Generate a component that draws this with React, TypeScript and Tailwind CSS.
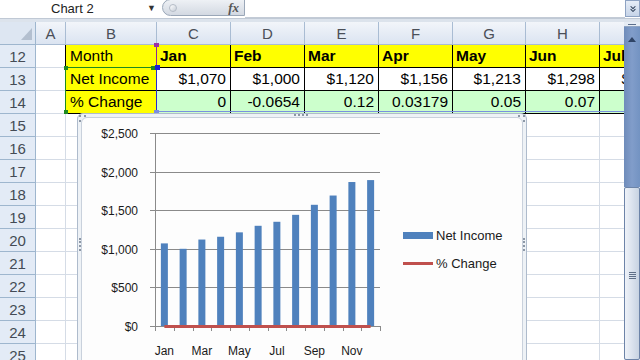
import React from "react";
import { ChevronsDown } from "lucide-react";

const cols = [
  { key: "A", w: "w-[30px]" },
  { key: "B", w: "w-[91px]" },
  { key: "C", w: "w-[74px]" },
  { key: "D", w: "w-[74px]" },
  { key: "E", w: "w-[74px]" },
  { key: "F", w: "w-[74px]" },
  { key: "G", w: "w-[73px]" },
  { key: "H", w: "w-[74px]" },
  { key: "I", w: "w-[74px]" },
];

const months = ["Jan", "Feb", "Mar", "Apr", "May", "Jun", "Jul"];
const income = ["$1,070", "$1,000", "$1,120", "$1,156", "$1,213", "$1,298", "$1,350"];
const change = ["0", "-0.0654", "0.12", "0.03179", "0.05", "0.07", "0.04"];

const chartValues = [1070, 1000, 1120, 1156, 1213, 1298, 1350, 1440, 1570, 1690, 1865, 1890];
const chartMonths = ["Jan", "Feb", "Mar", "Apr", "May", "Jun", "Jul", "Aug", "Sep", "Oct", "Nov", "Dec"];

const Y0 = 326;
const SCALE = 193 / 2500;
const X0 = 155;
const STEP = 18.75;

const Cell = ({ className, children }: { className: string; children?: React.ReactNode }) => (
  <div className={`shrink-0 h-full flex items-center border-r border-b ${className}`}>{children}</div>
);

const dataCell = (row: number, i: number) => {
  // i: index in C..I
  if (row === 12)
    return (
      <Cell key={i} className={`${cols[i + 2].w} bg-[#ffff00] border-black font-bold pl-[3px]`}>
        {months[i]}
      </Cell>
    );
  if (row === 13)
    return (
      <Cell key={i} className={`${cols[i + 2].w} bg-white border-black justify-end pr-[4px]`}>
        {income[i]}
      </Cell>
    );
  return (
    <Cell key={i} className={`${cols[i + 2].w} bg-[#ccffcc] border-black justify-end pr-[4px]`}>
      {change[i]}
    </Cell>
  );
};

const Chart = () => {
  const grid = [0, 500, 1000, 1500, 2000, 2500];
  const labels = ["$0", "$500", "$1,000", "$1,500", "$2,000", "$2,500"];
  return (
    <svg width="440" height="260" viewBox="82 118 440 260" className="block" fontFamily="'Liberation Sans', Arial, sans-serif">
      {grid.map((g, i) => {
        const y = Math.round(Y0 - g * SCALE) + 0.5;
        return (
          <g key={g}>
            <line x1={150} x2={380} y1={y} y2={y} stroke="#8a8a8a" strokeWidth={1} />
            <text x={138} y={y + 4.5} fontSize="12" textAnchor="end" fill="#1a1a1a">
              {labels[i]}
            </text>
          </g>
        );
      })}
      <line x1={155.5} x2={155.5} y1={133} y2={330} stroke="#8a8a8a" strokeWidth={1} />
      {Array.from({ length: 13 }).map((_, k) => {
        const x = Math.round(X0 + STEP * k) + 0.5;
        return <line key={k} x1={x} x2={x} y1={326} y2={331} stroke="#8a8a8a" strokeWidth={1} />;
      })}
      {chartValues.map((v, i) => {
        const cx = X0 + STEP * (i + 0.5);
        const h = v * SCALE;
        return <rect key={i} x={cx - 3.5} y={Y0 - h} width={7} height={h} fill="#4f81bd" />;
      })}
      <line x1={X0 + STEP * 0.5} x2={X0 + STEP * 11.5} y1={326.5} y2={326.5} stroke="#c0504d" strokeWidth={3} />
      {chartMonths.map((m, i) =>
        i % 2 === 0 ? (
          <text key={m} x={X0 + STEP * (i + 0.5)} y={355} fontSize="12" textAnchor="middle" fill="#1a1a1a">
            {m}
          </text>
        ) : null
      )}
      <rect x={403} y={232} width={30} height={7} fill="#4f81bd" />
      <text x={436} y={240} fontSize="13" fill="#1a1a1a">
        Net Income
      </text>
      <line x1={403} x2={433} y1={263.5} y2={263.5} stroke="#c0504d" strokeWidth={3} />
      <text x={436} y={268} fontSize="13" fill="#1a1a1a">
        % Change
      </text>
    </svg>
  );
};

const App = () => {
  const rows = [12, 13, 14, 15, 16, 17, 18, 19, 20, 21, 22, 23, 24, 25];

  return (
    <div className="w-[640px] h-[360px] overflow-hidden bg-white flex flex-col font-['Liberation_Sans',Arial,sans-serif] text-black">
      {/* formula bar */}
      <div className="h-[18px] flex shrink-0 bg-white">
        <div className="w-[162px] flex items-center pl-[51px] pr-[6px] text-[13px] text-[#222]">
          <span className="flex-1">Chart 2</span>
          <span className="text-[9px] text-[#333]">▼</span>
        </div>
        <div className="w-[83px] h-[17px] -mt-[1px] rounded-bl-[10px] rounded-tl-[10px] border border-[#9aa7b8] bg-gradient-to-b from-[#eef1f5] to-[#d3d9e2] flex items-center pl-[6px] pr-[5px]">
          <div className="w-[8px] h-[8px] rounded-full bg-gradient-to-br from-white to-[#c7ced8] border border-[#b4bcc7]" />
          <span className="ml-auto font-['Liberation_Serif',serif] italic font-bold text-[13px] text-[#555] leading-none">
            fx
          </span>
        </div>
        <div className="flex-1 border-b border-[#c3cbd6] bg-white" />
        <div className="w-[15px] h-[17px] bg-gradient-to-b from-[#e6edf7] to-[#c6d4e8] border border-[#8ea3c3] flex items-center justify-center">
          <ChevronsDown size={10} strokeWidth={2.5} color="#2d3e57" />
        </div>
      </div>
      <div className="h-[4px] shrink-0 bg-[#dce3ec] border-t border-[#c0c9d5]" />

      {/* sheet */}
      <div className="flex flex-1 min-h-0">
        <div className="w-[624px] overflow-hidden relative text-[15.5px] leading-none">
          {/* column header */}
          <div className="flex h-[23px]">
            <div className="w-[36px] shrink-0 h-full bg-[#dde6f2] border-r border-b border-[#9eb6ce] flex items-end justify-end pr-[3px] pb-[4px]">
              <svg width="11" height="12" viewBox="0 0 11 12">
                <polygon points="11,0 11,12 0,12" fill="#b3bfcf" />
              </svg>
            </div>
            {cols.map((c) => (
              <div
                key={c.key}
                className={`${c.w} shrink-0 h-full flex items-center justify-center text-[15px] text-[#4a4f58] bg-gradient-to-b from-[#f2f5fa] to-[#dbe4f1] border-r border-b border-[#a9bcd3]`}
              >
                {c.key}
              </div>
            ))}
          </div>

          {rows.map((r) => (
            <div key={r} className="flex h-[23px]">
              <div className="w-[36px] shrink-0 h-full flex items-center justify-center text-[15px] text-[#444b55] bg-[#e3ebf6] border-r border-b border-[#9eb6ce]">
                {r}
              </div>
              {r <= 14 ? (
                <>
                  <Cell className="w-[30px] bg-white border-r-black border-b-[#d5dce6]" />
                  <Cell className="w-[91px] bg-[#ffff00] border-black pl-[4px]">
                    {r === 12 ? "Month" : r === 13 ? "Net Income" : "% Change"}
                  </Cell>
                  {months.map((_, i) => dataCell(r, i))}
                </>
              ) : (
                cols.map((c) => <Cell key={c.key} className={`${c.w} bg-white border-[#d5dce6]`} />)
              )}
            </div>
          ))}

          {/* chart data range markers */}
          <div className="absolute left-[66px] top-[45px] w-[91px] h-[1px] bg-[#1f8a1f]" />
          <div className="absolute left-[65px] top-[45px] w-[1px] h-[46px] bg-[#1f8a1f]" />
          <div className="absolute left-[156px] top-[23px] w-[1px] h-[22px] bg-[#8a2a9a]" />
          <div className="absolute left-[156px] top-[46px] w-[1px] h-[45px] bg-[#2a2ad0]" />
          <div className="absolute left-[157px] top-[89px] w-[467px] h-[1px] bg-[#7b8ee0]" />
          <div className="absolute left-[154px] top-[21px] w-[5px] h-[4px] bg-[#9b2fa8]" />
          <div className="absolute left-[151px] top-[44px] w-[4px] h-[4px] bg-[#1f8a1f]" />
          <div className="absolute left-[155px] top-[43px] w-[5px] h-[5px] bg-[#1c1cd8]" />
          <div className="absolute left-[64px] top-[44px] w-[4px] h-[4px] bg-[#1f8a1f]" />
          <div className="absolute left-[64px] top-[88px] w-[4px] h-[4px] bg-[#1f8a1f]" />
          <div className="absolute left-[154px] top-[88px] w-[5px] h-[4px] bg-[#7b8ee0]" />

          {/* floating chart */}
          <div className="absolute left-[77px] top-[91px] w-[450px] h-[280px] rounded-[6px] border border-[#aebbcc] bg-[#eef2f6] p-[3px]">
            <div className="w-full h-full rounded-[6px] border border-[#c9d1dc] bg-[#fdfdfd] overflow-hidden">
              <Chart />
            </div>
            <div className="absolute left-[1px] top-[124px] w-[2px] h-[13px] border-l-2 border-dotted border-[#8c97a6]" />
            <div className="absolute right-[1px] top-[124px] w-[2px] h-[13px] border-l-2 border-dotted border-[#8c97a6]" />
            <div className="absolute left-[216px] top-[0px] w-[14px] h-[2px] border-t-2 border-dotted border-[#8c97a6]" />
            <div className="absolute left-[1px] top-[1px] w-[7px] h-[7px] border-l-2 border-t-2 border-dotted border-[#8c97a6]" />
            <div className="absolute right-[1px] top-[1px] w-[7px] h-[7px] border-r-2 border-t-2 border-dotted border-[#8c97a6]" />
          </div>
        </div>

        {/* vertical scrollbar */}
        <div className="w-[16px] flex flex-col bg-[#dfe6ef]">
          <div className="h-[5px] shrink-0 bg-[#e6ecf4] border-b border-[#8fa5c4] flex items-center justify-center">
            <div className="w-[8px] h-[1px] bg-[#5c6f8c]" />
          </div>
          <div className="h-[160px] shrink-0 bg-gradient-to-r from-[#6f8cba] via-[#819dca] to-[#7393c2] flex justify-center pt-[10px]">
            <svg width="8" height="5" viewBox="0 0 8 5">
              <polygon points="4,0 8,5 0,5" fill="#2f4466" />
            </svg>
          </div>
          <div className="flex-1 rounded-[2px] border border-[#6d84a8] bg-gradient-to-r from-[#eef2f8] via-[#dbe3ee] to-[#c8d3e2] flex items-start justify-center pt-[84px]">
            <div className="flex flex-col gap-[1px]">
              <div className="w-[7px] h-[1px] bg-[#5f6f87]" />
              <div className="w-[7px] h-[1px] bg-[#5f6f87]" />
              <div className="w-[7px] h-[1px] bg-[#5f6f87]" />
              <div className="w-[7px] h-[1px] bg-[#5f6f87]" />
            </div>
          </div>
        </div>
      </div>
    </div>
  );
};

export default App;
